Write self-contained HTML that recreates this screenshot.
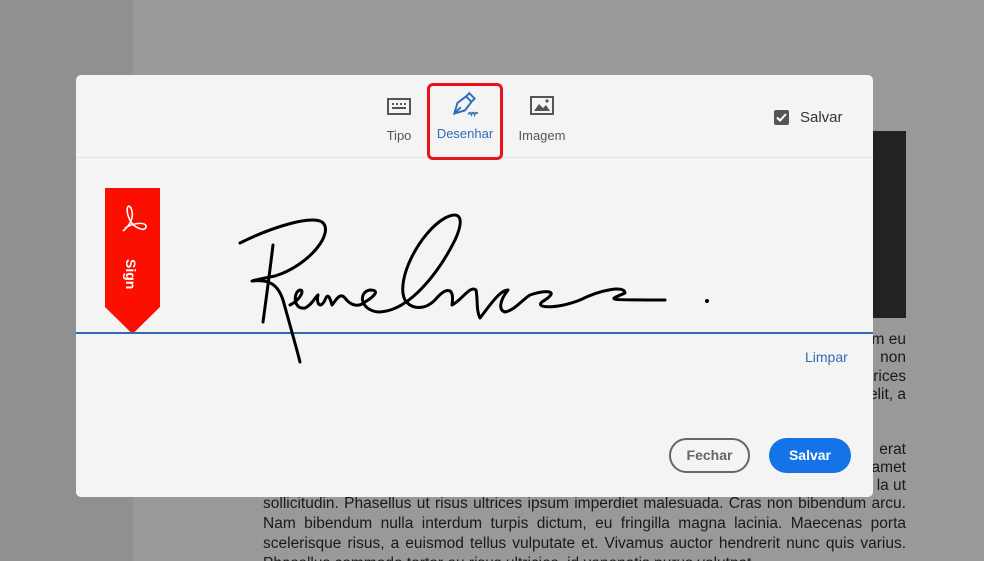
<!DOCTYPE html>
<html style="overflow:hidden;height:561px"><head><style>
body{margin:0;width:984px;height:561px;overflow:hidden;background:#999;font-family:"Liberation Sans",Arial,sans-serif;position:relative}
.l{position:absolute;left:0;top:0;width:133px;height:561px;background:#909090}
.blk{position:absolute;left:873px;top:131px;width:33px;height:187px;background:#222}
.t{position:absolute;font-size:15.5px;color:#1a1a1a;white-space:nowrap}
.r{right:78px;text-align:right}
.dlg{position:absolute;left:76px;top:75px;width:797px;height:422px;background:#f4f4f4;border-radius:5px;overflow:hidden}
.tab{position:absolute;top:0;text-align:center;font-size:13px;color:#555}
</style></head><body>
<div class="l"></div>
<div class="blk"></div>
<div class="t r" style="top:331px">m eu</div>
<div class="t r" style="top:349px">non</div>
<div class="t r" style="top:368px">rices</div>
<div class="t r" style="top:386px">elit, a</div>
<div class="t r" style="top:441px">erat</div>
<div class="t r" style="top:459px">amet</div>
<div class="t r" style="top:477px">la ut</div>
<div class="t" style="left:263px;top:494px;width:643px;height:67px;overflow:hidden;text-align:justify;line-height:20px">
<div style="text-align-last:justify">sollicitudin. Phasellus ut risus ultrices ipsum imperdiet malesuada. Cras non bibendum arcu.</div>
<div style="text-align-last:justify">Nam bibendum nulla interdum turpis dictum, eu fringilla magna lacinia. Maecenas porta</div>
<div style="text-align-last:justify">scelerisque risus, a euismod tellus vulputate et. Vivamus auctor hendrerit nunc quis varius.</div>
<div>Phasellus commodo tortor eu risus ultricies, id venenatis purus volutpat.</div>
</div>
<div class="dlg">
 <div style="position:absolute;left:0;top:82px;width:797px;height:1px;background:#e2e2e2"></div>
 <div class="tab" style="left:305px;width:36px">
  <svg width="26" height="20" style="margin-top:22px" viewBox="0 0 26 20"><rect x="2" y="2" width="22" height="15" fill="none" stroke="#555" stroke-width="2"/><g fill="#555"><rect x="6" y="6" width="2" height="2"/><rect x="10" y="6" width="2" height="2"/><rect x="14" y="6" width="2" height="2"/><rect x="18" y="6" width="2" height="2"/><rect x="6" y="10" width="14" height="2"/></g></svg>
  <div style="margin-top:8px">Tipo</div></div>
 <div style="position:absolute;left:351px;top:8px;width:76px;height:77px;border:3px solid #e8121c;border-radius:6px;box-sizing:border-box"></div>
 <div class="tab" style="left:356px;width:66px;color:#2d6db5">
  <svg width="30" height="26" style="margin-top:17px" viewBox="0 0 28 24"><path d="M4 20 L7 10 L15 4 L20 9 L14 17 Z M4 20 L10 14 M15 4 L18 1 L23 6 L20 9" fill="none" stroke="#2d6db5" stroke-width="1.8"/><path d="M17 21 q2-4 3 0 q2-4 3 0 q1-3 3-1" fill="none" stroke="#2d6db5" stroke-width="1.5"/></svg>
  <div style="margin-top:5px">Desenhar</div></div>
 <div class="tab" style="left:441px;width:50px">
  <svg width="26" height="22" style="margin-top:20px" viewBox="0 0 26 22"><rect x="2" y="2" width="22" height="17" fill="none" stroke="#555" stroke-width="2"/><path d="M5 16 L10 9 L14 13 L17 10 L21 16Z" fill="#555"/><circle cx="18" cy="6" r="1.6" fill="#555"/></svg>
  <div style="margin-top:8px">Imagem</div></div>
 <div style="position:absolute;left:698px;top:35px;width:15px;height:15px;background:#555;border-radius:2px"><svg width="15" height="15"><path d="M3 7.5 L6 10.5 L12 4" fill="none" stroke="#fff" stroke-width="2"/></svg></div>
 <div style="position:absolute;left:724px;top:34px;font-size:15px;color:#333">Salvar</div>
 <svg style="position:absolute;left:29px;top:113px" width="55" height="146" viewBox="0 0 55 146"><path d="M0 0H55V119L27.5 146L0 119Z" fill="#fa0f00"/><path d="M18 43 C24 38 30 30 26 20 C22 14 20 24 26 34 C30 40 40 44 41 39 C42 34 30 34 20 40" fill="none" stroke="#fff" stroke-width="1.6"/><text x="0" y="0" transform="translate(21 71) rotate(90)" fill="#fff" font-size="14" font-weight="bold" font-family="Liberation Sans,sans-serif">Sign</text></svg>
 <div style="position:absolute;left:0;top:257px;width:797px;height:2px;background:#2d6db5"></div>
 <svg style="position:absolute;left:0;top:0" width="797" height="422"><g fill="none" stroke="#000" stroke-width="3" stroke-linecap="round" stroke-linejoin="round" transform="translate(-76 -75)">
  <path d="M240 243 C270 228 310 215 322 222 C335 232 310 265 275 276 C265 278 255 280 252 281 C270 279 278 285 283 300 C290 325 297 350 300 362"/>
  <path d="M273 245 C270 270 266 300 263 322"/>
  <path d="M290 305 C300 300 305 290 300 290 C293 292 293 310 305 308 C312 305 315 297 318 295 C316 303 320 310 325 300 C328 292 330 298 332 305 C336 300 340 292 345 298 C350 305 358 308 365 302 C375 296 380 290 370 290 C358 292 360 310 378 312 C410 312 440 270 455 240 C465 218 460 210 445 218 C420 232 395 280 405 300 C412 310 425 310 435 300 C445 288 455 285 452 305 C462 300 470 285 476 290 C478 300 476 310 480 318 C490 305 500 290 508 290 C500 300 498 310 505 312 C515 310 522 300 530 295 C545 290 560 290 545 300 C530 308 555 310 580 300 C600 290 625 285 625 293 C610 300 600 300 665 300"/>
 </g><circle cx="631" cy="226" r="2" fill="#000"/></svg>
 <div style="position:absolute;left:729px;top:274px;font-size:14px;color:#2d6db5">Limpar</div>
 <div style="position:absolute;left:593px;top:363px;width:81px;height:35px;box-sizing:border-box;border:2px solid #666;border-radius:18px;text-align:center;line-height:31px;font-size:14px;font-weight:bold;color:#666">Fechar</div>
 <div style="position:absolute;left:693px;top:363px;width:82px;height:35px;background:#1473e6;border-radius:18px;text-align:center;line-height:35px;font-size:14px;font-weight:bold;color:#fff">Salvar</div>
</div>
</body></html>
